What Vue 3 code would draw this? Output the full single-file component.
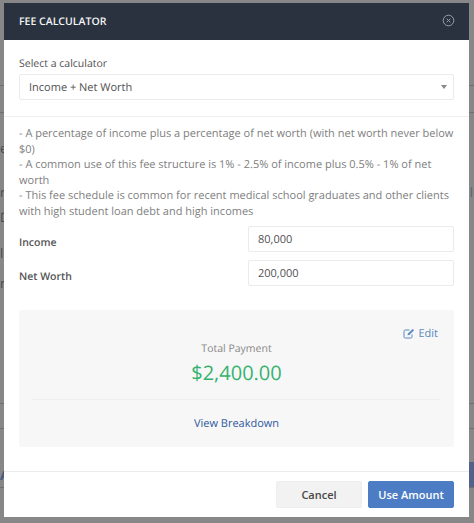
<script setup>
const backdropRows = [
  { height: 86, line: true },
  { height: 27, line: true },
  { height: 70, left: 'e' },
  { height: 18, left: 'r', right: 'l' },
  { height: 32, left: 'D' },
  { height: 40, left: 'l' },
  { height: 20, left: 'r' },
  { height: 111, line: true },
  { height: 25, line: true },
  { height: 33 },
  { height: 26, line: true, left: 'A', action: true },
  { height: 35 }
]
const descriptionLines = [
  '- A percentage of income plus a percentage of net worth (with net worth never below $0)',
  '- A common use of this fee structure is 1% - 2.5% of income plus 0.5% - 1% of net worth',
  '- This fee schedule is common for recent medical school graduates and other clients with high student loan debt and high incomes'
]
const fields = [
  { label: 'Income', value: '80,000' },
  { label: 'Net Worth', value: '200,000' }
]
</script>

<template>
  <div class="page">
    <div class="backdrop">
      <div
        v-for="(row, i) in backdropRows"
        :key="i"
        class="bd-row"
        :class="{ line: row.line, action: row.action }"
        :style="{ height: row.height + 'px' }"
      >
        <span class="bd-left">{{ row.left }}</span>
        <span class="bd-right">{{ row.right }}</span>
      </div>
    </div>

    <section class="modal">
      <header class="modal-head">
        <h1>FEE CALCULATOR</h1>
        <svg class="close" width="13" height="13" viewBox="0 0 13 13" fill="none" stroke="#9aa0a8">
          <circle cx="6.500" cy="6.500" r="5.300" />
          <path d="M4.700 4.700l3.600 3.600M8.300 4.700l-3.600 3.600" />
        </svg>
      </header>

      <div class="select-area">
        <label class="select-label">Select a calculator</label>
        <div class="select">
          <span class="select-value">Income + Net Worth</span>
          <i class="caret"></i>
        </div>
      </div>

      <div class="content">
        <p class="desc">
          <span v-for="line in descriptionLines" :key="line" class="desc-line">{{ line }}</span>
        </p>

        <div class="fields">
          <div v-for="f in fields" :key="f.label" class="field">
            <label>{{ f.label }}</label>
            <div class="input">{{ f.value }}</div>
          </div>
        </div>

        <div class="result">
          <a class="edit">
            <svg width="12" height="11" viewBox="0 0 12 11" fill="none" stroke="#5a88c0" stroke-width="1">
              <path d="M9 6.500v2.200a1.300 1.300 0 0 1-1.300 1.300H2.300A1.300 1.300 0 0 1 1 8.700V3.300A1.300 1.300 0 0 1 2.300 2H6.500" />
              <path d="M4.500 7.300l.4-1.800L9.700.9l1.400 1.400-4.800 4.600z" fill="#5a88c0" stroke="none" />
            </svg>
            Edit
          </a>
          <div class="total-label">Total Payment</div>
          <div class="total">$2,400.00</div>
          <div class="breakdown"><a>View Breakdown</a></div>
        </div>
      </div>

      <footer class="modal-foot">
        <button class="btn cancel">Cancel</button>
        <button class="btn primary">Use Amount</button>
      </footer>
    </section>
  </div>
</template>

<style>
html, body { margin: 0; padding: 0; }
</style>

<style scoped>
.page {
  position: relative;
  width: 474px;
  height: 523px;
  overflow: hidden;
  background: #878787;
  font-family: "Open Sans", "Noto Sans", sans-serif;
  text-rendering: geometricPrecision;
}
.backdrop { display: flex; flex-direction: column; }
.bd-row {
  box-sizing: border-box;
  display: flex;
  align-items: center;
  justify-content: space-between;
  font-size: 13px;
  color: #4a4a4a;
}
.bd-row.line { border-bottom: 1px solid #6f6f6f; }
.bd-right { color: #5b6270; margin-right: 1px; }
.bd-row.action .bd-left { color: #44597f; font-weight: 700; }
.bd-row.action .bd-right {
  align-self: stretch;
  width: 5px;
  margin-right: 0;
  background: #52628a;
}
.modal {
  position: absolute;
  top: 3px;
  left: 4px;
  width: 465px;
  height: 514px;
  background: #fff;
  display: flex;
  flex-direction: column;
}
.modal-head {
  height: 37px;
  flex: none;
  background: #29323e;
  display: flex;
  align-items: center;
  justify-content: space-between;
  padding: 0 14px 0 15px;
}
.modal-head h1 {
  margin: 0;
  font-size: 10.500px;
  font-weight: 600;
  color: #f4f5f6;
}
.close { margin-top: -2px; }
.select-area {
  flex: none;
  height: 77px;
  box-sizing: border-box;
  padding: 17px 15px 0;
  border-bottom: 1px solid #efefef;
}
.select-label {
  display: block;
  font-size: 10.500px;
  font-weight: 500;
  color: #505050;
  line-height: 15px;
  margin-bottom: 2px;
}
.select {
  height: 26px;
  box-sizing: border-box;
  border: 1px solid #ebebeb;
  border-radius: 2px;
  display: flex;
  align-items: center;
  justify-content: space-between;
  padding: 0 6px 0 9px;
  font-size: 11px;
  color: #505050;
}
.select-value { margin-top: 1px; }
.caret {
  width: 0;
  height: 0;
  border-left: 3px solid transparent;
  border-right: 3px solid transparent;
  border-top: 4px solid #888;
}
.content {
  flex: 1;
  padding: 9px 15px 0;
  display: flex;
  flex-direction: column;
}
.desc {
  margin: 0;
  font-size: 11px;
  line-height: 15.500px;
  color: #808080;
}
.desc-line { display: block; }
.fields {
  margin-top: 7px;
  display: flex;
  flex-direction: column;
  gap: 8px;
}
.field {
  display: flex;
  align-items: center;
  justify-content: space-between;
}
.field label {
  font-size: 10.500px;
  font-weight: 600;
  color: #555;
  margin-top: 7px;
}
.input {
  width: 206px;
  height: 26px;
  line-height: 26px;
  box-sizing: border-box;
  border: 1px solid #ebebeb;
  border-radius: 2px;
  padding: 0 9px;
  font-size: 11px;
  color: #505050;
}
.result {
  position: relative;
  margin-top: 24px;
  height: 137px;
  background: #f7f7f7;
  border-radius: 2px;
  box-sizing: border-box;
  padding-top: 31px;
  text-align: center;
}
.edit {
  position: absolute;
  top: 16px;
  right: 16px;
  display: flex;
  align-items: center;
  gap: 3px;
  font-size: 11px;
  color: #5a88c0;
}
.total-label {
  font-size: 10.500px;
  color: #888;
  line-height: 16px;
}
.total {
  font-size: 20px;
  line-height: 31px;
  color: #35b26f;
}
.breakdown {
  margin: 11px 13px 0;
  border-top: 1px solid #efefef;
  padding-top: 15px;
  font-size: 11px;
  line-height: 17px;
  color: #2f5a9c;
}
.modal-foot {
  flex: none;
  height: 46px;
  border-top: 1px solid #ececec;
  display: flex;
  justify-content: flex-end;
  gap: 6px;
  padding: 9px 15px 0;
  box-sizing: border-box;
}
.btn {
  width: 86px;
  height: 27px;
  border-radius: 2px;
  font-family: inherit;
  font-size: 11px;
  font-weight: 600;
  padding: 0;
  border: 1px solid transparent;
}
.cancel { background: #f2f2f2; border-color: #eeeeee; color: #484848; }
.primary { background: #4c7dc4; border-color: #4c7dc4; color: #fff; }
</style>
